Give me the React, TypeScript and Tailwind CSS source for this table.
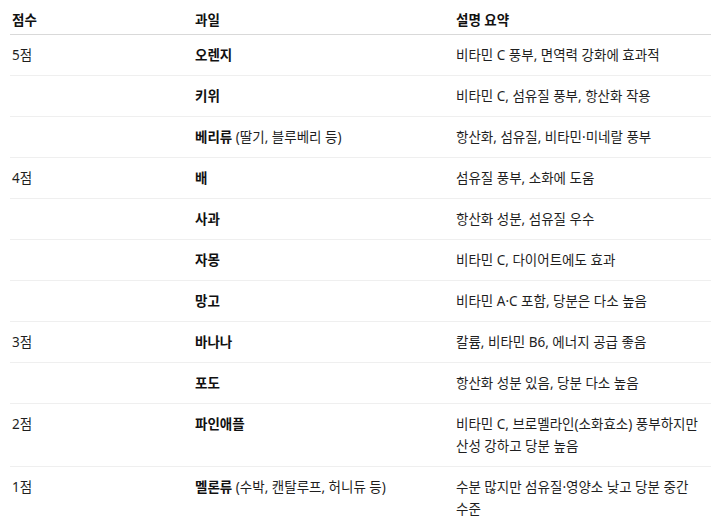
const rows: { score: string; name: string; extra?: string; desc: string[] }[] = [
  { score: '5점', name: '오렌지', desc: ['비타민 C 풍부, 면역력 강화에 효과적'] },
  { score: '', name: '키위', desc: ['비타민 C, 섬유질 풍부, 항산화 작용'] },
  { score: '', name: '베리류', extra: ' (딸기, 블루베리 등)', desc: ['항산화, 섬유질, 비타민·미네랄 풍부'] },
  { score: '4점', name: '배', desc: ['섬유질 풍부, 소화에 도움'] },
  { score: '', name: '사과', desc: ['항산화 성분, 섬유질 우수'] },
  { score: '', name: '자몽', desc: ['비타민 C, 다이어트에도 효과'] },
  { score: '', name: '망고', desc: ['비타민 A·C 포함, 당분은 다소 높음'] },
  { score: '3점', name: '바나나', desc: ['칼륨, 비타민 B6, 에너지 공급 좋음'] },
  { score: '', name: '포도', desc: ['항산화 성분 있음, 당분 다소 높음'] },
  { score: '2점', name: '파인애플', desc: ['비타민 C, 브로멜라인(소화효소) 풍부하지만', '산성 강하고 당분 높음'] },
  { score: '1점', name: '멜론류', extra: ' (수박, 캔탈루프, 허니듀 등)', desc: ['수분 많지만 섬유질·영양소 낮고 당분 중간', '수준'] },
]

export default function App() {
  return (
    <div className="min-h-[522px] bg-white font-['Noto_Sans','Noto_Sans_CJK_KR',sans-serif] text-[13.5px] leading-[22px] text-[#1f1f1f]">
      <table className="ml-[10px] w-[701px] table-fixed border-collapse">
        <colgroup>
          <col className="w-[183px]" />
          <col className="w-[261px]" />
          <col className="w-[257px]" />
        </colgroup>
        <thead>
          <tr className="border-b border-[#d9d9d9]">
            <th className="pl-[2px] pt-[9px] pb-[3px] text-left font-bold text-[#111]">점수</th>
            <th className="pl-[2px] pt-[9px] pb-[3px] text-left font-bold text-[#111]">과일</th>
            <th className="pl-[2px] pt-[9px] pb-[3px] text-left font-bold text-[#111]">설명 요약</th>
          </tr>
        </thead>
        <tbody>
          {rows.map((r, i) => (
            <tr key={i} className={i < rows.length - 1 ? 'border-b border-[#efefef]' : ''}>
              <td className="pl-[2px] py-[9px] align-top">{r.score}</td>
              <td className="pl-[2px] py-[9px] align-top">
                <span className="font-bold text-[#111]">{r.name}</span>
                {r.extra}
              </td>
              <td className="pl-[2px] py-[9px] align-top">
                {r.desc.map((line, j) => (
                  <div key={j} className="whitespace-nowrap">
                    {line}
                  </div>
                ))}
              </td>
            </tr>
          ))}
        </tbody>
      </table>
    </div>
  )
}
